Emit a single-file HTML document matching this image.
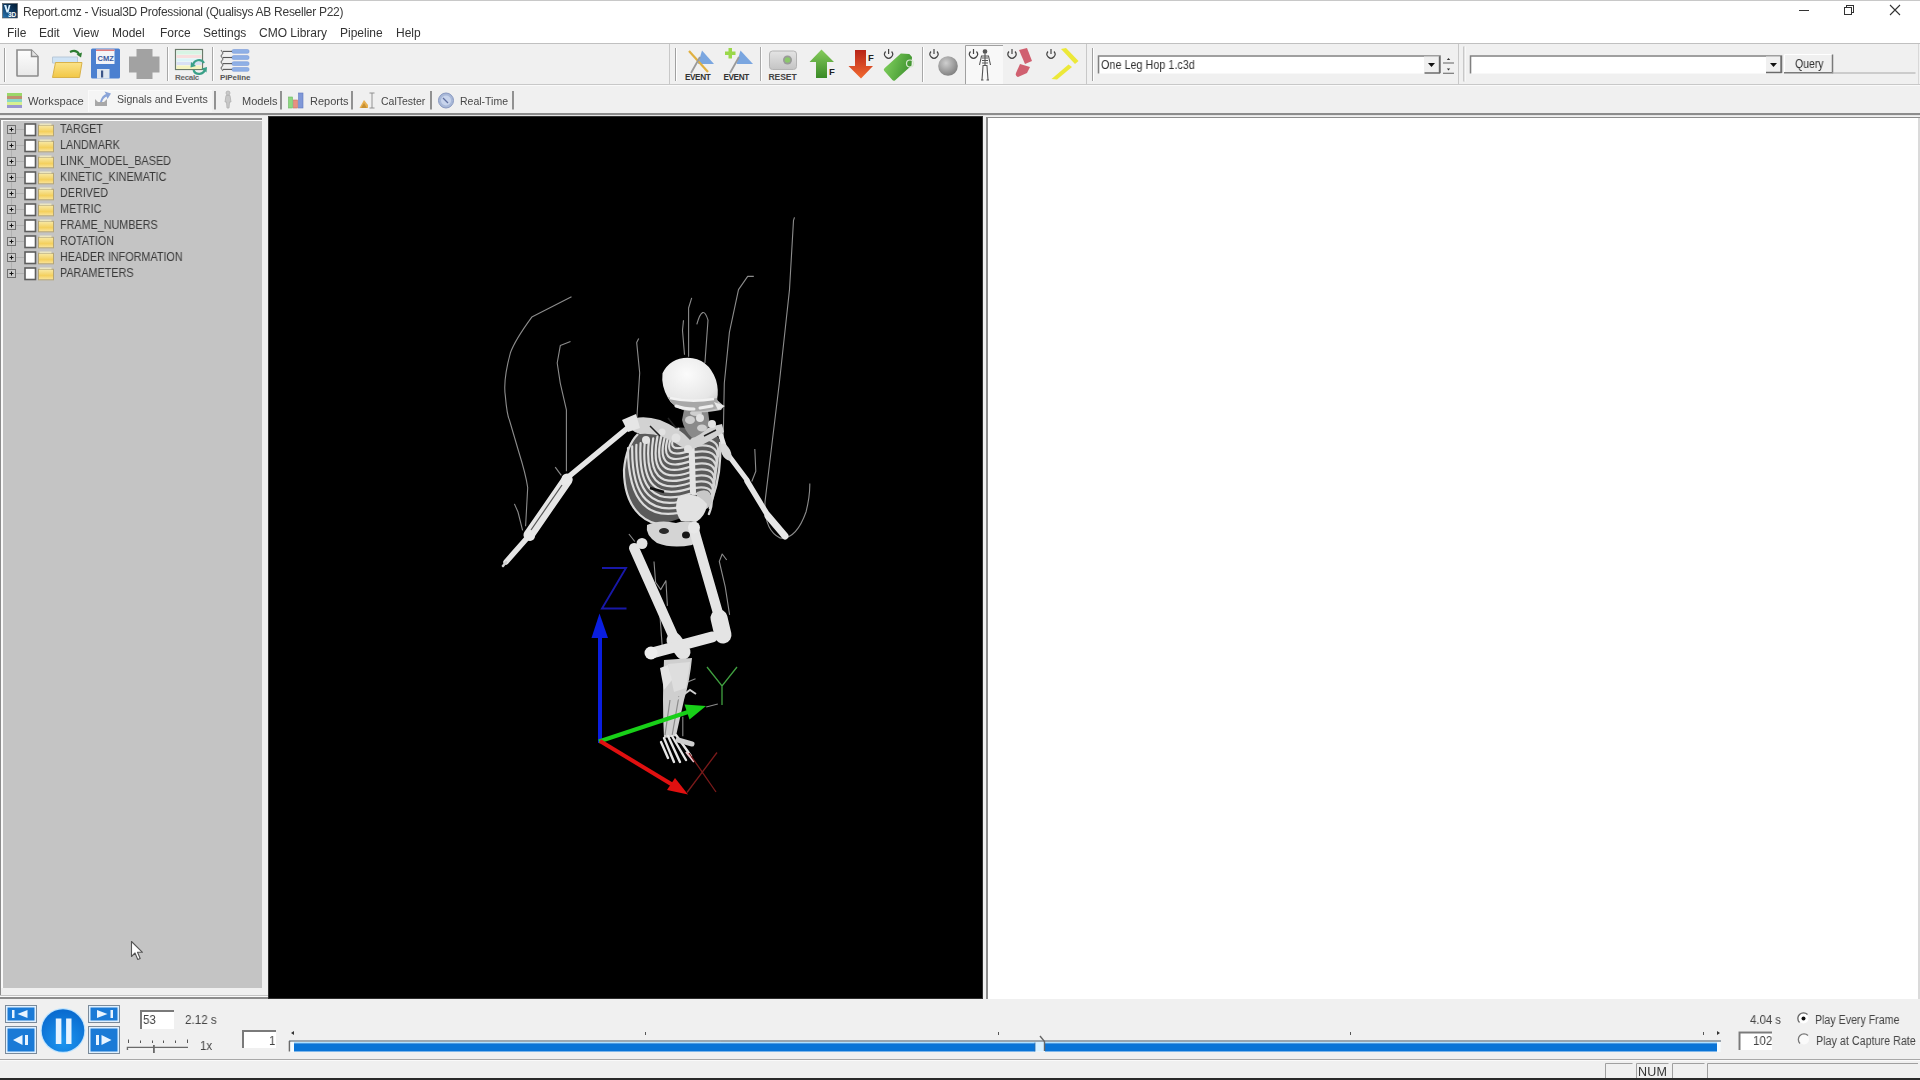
<!DOCTYPE html>
<html><head><meta charset="utf-8">
<style>
*{box-sizing:border-box;margin:0;padding:0}
html,body{width:1920px;height:1080px;overflow:hidden;background:#f0f0f0;font-family:"Liberation Sans",sans-serif;color:#000;position:relative}
.a{position:absolute}
.t{position:absolute;white-space:nowrap;line-height:1;will-change:transform}
.hl{position:absolute;height:1px}
.vl{position:absolute;width:1px}
</style></head><body>
<!-- title bar -->
<div class="a" style="left:0;top:0;width:1920px;height:43px;background:#fff"></div>
<div class="hl" style="left:0;top:0;width:1920px;background:#c8c8c8"></div>
<svg class="a" style="left:2px;top:3px" width="17" height="16" viewBox="2 3 17 16">
<defs><linearGradient id="gIco" x1="0" y1="1" x2="1" y2="0"><stop offset="0" stop-color="#2a7ab8"/><stop offset="0.5" stop-color="#0e3a64"/><stop offset="1" stop-color="#031a30"/></linearGradient></defs>
<rect x="2.5" y="3.5" width="15" height="14.5" fill="url(#gIco)" stroke="#555" stroke-width="0.6"/>
<path d="M4 5 H6.3 L7.5 10 L8.7 5 H10.5 L8.5 12.5 H6.5 Z" fill="#d8f0ff"/>
<text x="8" y="17" font-family="Liberation Sans" font-weight="bold" font-size="6.5" fill="#fff">3D</text>
</svg>
<div class="t" style="left:23px;top:6px;font-size:12px;letter-spacing:-0.28px;color:#3a3a3a">Report.cmz - Visual3D Professional (Qualisys AB Reseller P22)</div>
<div class="a" style="left:1799px;top:10px;width:10px;height:1px;background:#333"></div>
<div class="a" style="left:1846px;top:5px;width:8px;height:8px;border:1px solid #333"></div>
<div class="a" style="left:1844px;top:7px;width:8px;height:8px;border:1px solid #333;background:#fff"></div>
<svg class="a" style="left:1889px;top:4px" width="12" height="12"><path d="M1 1L11 11M11 1L1 11" stroke="#333" stroke-width="1.1"/></svg>
<!-- menu -->
<div class="t" style="left:7px;top:27px;font-size:12px;color:#333;word-spacing:0">File</div>
<div class="t" style="left:39px;top:27px;font-size:12px;color:#333">Edit</div>
<div class="t" style="left:73px;top:27px;font-size:12px;color:#333">View</div>
<div class="t" style="left:112px;top:27px;font-size:12px;color:#333">Model</div>
<div class="t" style="left:160px;top:27px;font-size:12px;color:#333">Force</div>
<div class="t" style="left:203px;top:27px;font-size:12px;color:#333">Settings</div>
<div class="t" style="left:259px;top:27px;font-size:12px;color:#333">CMO Library</div>
<div class="t" style="left:340px;top:27px;font-size:12px;color:#333">Pipeline</div>
<div class="t" style="left:396px;top:27px;font-size:12px;color:#333">Help</div>
<div class="hl" style="left:0;top:43px;width:1920px;background:#c0c0c0"></div>
<div class="hl" style="left:0;top:84px;width:1920px;background:#c8c8c8"></div>
<div class="hl" style="left:0;top:85px;width:1920px;background:#fafafa"></div>
<div class="hl" style="left:0;top:113px;width:1920px;height:2px;background:#8c8c8c"></div>
<div class="hl" style="left:0;top:115px;width:1920px;height:1px;background:#e4e4e4"></div>


<!-- toolbar svg -->
<svg class="a" style="left:0;top:44px" width="1920" height="40" viewBox="0 44 1920 40">
<defs>
<linearGradient id="gPage" x1="0" y1="0" x2="0" y2="1"><stop offset="0" stop-color="#fdfdfd"/><stop offset="1" stop-color="#e8e8e8"/></linearGradient>
<linearGradient id="gFold" x1="0" y1="0" x2="0" y2="1"><stop offset="0" stop-color="#fbe38a"/><stop offset="1" stop-color="#f2c745"/></linearGradient>
<linearGradient id="gUp" x1="0" y1="0" x2="0" y2="1"><stop offset="0" stop-color="#7fc85a"/><stop offset="1" stop-color="#3e8e2a"/></linearGradient>
<linearGradient id="gDn" x1="0" y1="0" x2="0" y2="1"><stop offset="0" stop-color="#c0281a"/><stop offset="1" stop-color="#f05a28"/></linearGradient>
<radialGradient id="gSph" cx="0.4" cy="0.35" r="0.7"><stop offset="0" stop-color="#c8c8c8"/><stop offset="1" stop-color="#7a7a7a"/></radialGradient>
</defs>
<!-- grip -->
<line x1="4.5" y1="48" x2="4.5" y2="82" stroke="#a0a0a0"/><line x1="5.5" y1="48" x2="5.5" y2="82" stroke="#fff"/>
<!-- new doc -->
<path d="M17 50 H31.5 L38 56.5 V75.5 Q38 76 37.5 76 H17.5 Q17 76 17 75.5 Z" fill="url(#gPage)" stroke="#8c8c8c" stroke-width="1.6"/>
<path d="M31.5 50 V56.5 H38" fill="#e4e4e4" stroke="#8c8c8c" stroke-width="1.4"/>
<!-- open folder -->
<path d="M52.5 57 H77.5 V63 H52.5 Z" fill="#cfe3f5" stroke="#b8c8d8" stroke-width="1"/>
<path d="M55.5 62.5 H82 L79.5 77.5 H52.5 Z" fill="url(#gFold)" stroke="#d9b24a" stroke-width="1"/>
<path d="M70 52 Q76 49 79 54" fill="none" stroke="#2e7d32" stroke-width="2.2"/>
<path d="M76.5 54.5 L82 52.5 L81 57.5 Z" fill="#2e7d32"/>
<!-- save -->
<rect x="91" y="48.5" width="29" height="30" rx="1.5" fill="#4b80d0"/>
<rect x="96" y="49.5" width="18.5" height="14.5" fill="#f2f4f8"/>
<rect x="96" y="49.5" width="18.5" height="1.5" fill="#e07a7a"/>
<text x="97.5" y="61" font-family="Liberation Sans" font-weight="bold" font-size="7.5" fill="#3a5aa0">CMZ</text>
<rect x="97" y="69" width="12.5" height="9.5" fill="#dfe6ee"/>
<rect x="101" y="70.5" width="2.2" height="7" fill="#3d5688"/>
<!-- gray plus -->
<path d="M136.5 49 H152.5 V56.5 H159.5 V72.5 H152.5 V79 H136.5 V72.5 H129 V56.5 H136.5 Z" fill="#a2a2a2"/>
<!-- sep -->
<line x1="167.5" y1="47" x2="167.5" y2="81" stroke="#a8a8a8"/><line x1="168.5" y1="47" x2="168.5" y2="81" stroke="#fff"/>
<!-- recalc -->
<rect x="175.5" y="49.5" width="27" height="20" fill="#f4f8f4" stroke="#6a7a6a" stroke-width="1.2"/>
<rect x="176.5" y="51" width="25" height="3.5" fill="#d8f4e4"/>
<rect x="176.5" y="55" width="25" height="3" fill="#f8dede"/>
<rect x="176.5" y="58.5" width="25" height="3" fill="#dcf4f8"/>
<rect x="176.5" y="62" width="25" height="3" fill="#d8e0f4"/>
<rect x="176.5" y="65.5" width="25" height="3.5" fill="#f4f4c0"/>
<path d="M193 65 A6 6 0 0 1 204 63" fill="none" stroke="#3aa088" stroke-width="2.2"/>
<path d="M205 69 A6 6 0 0 1 193.5 70" fill="none" stroke="#3aa088" stroke-width="2.2"/>
<path d="M191 62 L196 66 L190.5 67.5 Z" fill="#3aa088"/><path d="M206.5 72.5 L201.5 68.5 L207 67 Z" fill="#3aa088"/>
<text x="175" y="80" font-family="Liberation Sans" font-weight="bold" font-size="8" fill="#666" letter-spacing="-0.3">Recalc</text>
<line x1="212.5" y1="47" x2="212.5" y2="81" stroke="#a8a8a8"/><line x1="213.5" y1="47" x2="213.5" y2="81" stroke="#fff"/>
<!-- pipeline -->
<g fill="#8fb0e6" stroke="#7a9ad8" stroke-width="0.6">
<rect x="232" y="49.5" width="17" height="3.8" rx="1.5"/><rect x="232" y="55.6" width="17" height="3.8" rx="1.5"/><rect x="232" y="61.7" width="17" height="3.8" rx="1.5"/><rect x="232" y="67.5" width="17" height="3.8" rx="1.5"/></g>
<g stroke="#555" stroke-width="1.1"><line x1="223" y1="51.4" x2="232" y2="51.4"/><line x1="223" y1="57.5" x2="232" y2="57.5"/><line x1="223" y1="63.6" x2="232" y2="63.6"/><line x1="223" y1="69.4" x2="232" y2="69.4"/></g>
<path d="M221 50 L223 53 L221 56 L223 59 L221 62 L223 65 L221 68 L223 71" fill="none" stroke="#777" stroke-width="1.1"/>
<text x="220" y="80" font-family="Liberation Sans" font-weight="bold" font-size="8" fill="#555" letter-spacing="-0.1">PiPeline</text>
</svg>


<!-- toolbar right -->
<svg class="a" style="left:660px;top:44px" width="1260" height="40" viewBox="660 44 1260 40">
<defs>
<linearGradient id="gUp2" x1="0" y1="0" x2="0" y2="1"><stop offset="0" stop-color="#86cc5c"/><stop offset="1" stop-color="#3a8a26"/></linearGradient>
<linearGradient id="gDn2" x1="0" y1="0" x2="0" y2="1"><stop offset="0" stop-color="#b82418"/><stop offset="1" stop-color="#f26a30"/></linearGradient>
<linearGradient id="gTag" x1="0" y1="0" x2="1" y2="1"><stop offset="0" stop-color="#7ccc5a"/><stop offset="1" stop-color="#3a8e2c"/></linearGradient>
<radialGradient id="gSph2" cx="0.4" cy="0.35" r="0.7"><stop offset="0" stop-color="#cfcfcf"/><stop offset="1" stop-color="#7c7c7c"/></radialGradient>
<linearGradient id="gRst" x1="0" y1="0" x2="0" y2="1"><stop offset="0" stop-color="#e4e4e4"/><stop offset="1" stop-color="#c4c4c4"/></linearGradient>
</defs>
<line x1="669.5" y1="44" x2="669.5" y2="84" stroke="#c8c8c8"/>
<line x1="675.5" y1="48" x2="675.5" y2="81" stroke="#a0a0a0"/><line x1="676.5" y1="48" x2="676.5" y2="81" stroke="#fff"/>
<!-- event 1 -->
<path d="M702 50.5 L714 64 H698 Z" fill="#7aa6e0"/>
<line x1="689" y1="51" x2="708" y2="72" stroke="#e0b040" stroke-width="2.2"/>
<line x1="700" y1="57" x2="691" y2="73" stroke="#9a9a9a" stroke-width="1.8"/>
<text x="685" y="80" font-family="Liberation Sans" font-weight="bold" font-size="8.2" fill="#333" letter-spacing="-0.4">EVENT</text>
<!-- event 2 -->
<path d="M740.5 50.5 L753 64 H736.5 Z" fill="#7aa6e0"/>
<path d="M725 51.5 H728.5 V48 H732 V51.5 H735.5 V55 H732 V58.5 H728.5 V55 H725 Z" fill="#9ad84a"/>
<line x1="739" y1="57" x2="730" y2="73" stroke="#9a9a9a" stroke-width="1.8"/>
<text x="723.5" y="80" font-family="Liberation Sans" font-weight="bold" font-size="8.2" fill="#333" letter-spacing="-0.4">EVENT</text>
<line x1="760.5" y1="47" x2="760.5" y2="81" stroke="#a8a8a8"/><line x1="761.5" y1="47" x2="761.5" y2="81" stroke="#fff"/>
<!-- reset -->
<rect x="769.5" y="51" width="27" height="18.5" rx="3" fill="url(#gRst)" stroke="#b4b4b4" stroke-width="1"/>
<circle cx="787.5" cy="60" r="4.5" fill="#9a9a9a"/><circle cx="787.5" cy="60" r="2.8" fill="#8ac86a"/>
<text x="768.5" y="80" font-family="Liberation Sans" font-weight="bold" font-size="8.6" fill="#444" letter-spacing="-0.1">RESET</text>
<!-- up arrow -->
<path d="M821.5 49.5 L834 62 H827 V78 H816 V62 H809.5 Z" fill="url(#gUp2)"/>
<text x="829" y="74.5" font-family="Liberation Sans" font-weight="bold" font-size="9.5" fill="#222">F</text>
<!-- down arrow -->
<path d="M855 50 H866 V66 H873 L861 78.5 L848.5 66 H855 Z" fill="url(#gDn2)"/>
<text x="868" y="61" font-family="Liberation Sans" font-weight="bold" font-size="9.5" fill="#222">F</text>
<!-- power + tag -->
<g fill="none" stroke="#444" stroke-width="1.2"><path d="M885.6 51.5 A4 4 0 1 0 891.6 51.5"/><line x1="888.6" y1="49" x2="888.6" y2="54"/></g>
<g transform="translate(899.5 65.5) rotate(-42)"><path d="M-15 -6 Q-15 -8 -13 -8 H9 L15 -2 V2 L9 8 H-13 Q-15 8 -15 6 Z" fill="url(#gTag)"/></g>
<circle cx="910" cy="63.5" r="3.5" fill="none" stroke="#d8e8d0" stroke-width="1.2"/>
<line x1="922.5" y1="47" x2="922.5" y2="82" stroke="#a8a8a8"/><line x1="923.5" y1="47" x2="923.5" y2="82" stroke="#fff"/>
<!-- power + sphere -->
<g fill="none" stroke="#444" stroke-width="1.2"><path d="M931 51.5 A4 4 0 1 0 937 51.5"/><line x1="934" y1="49" x2="934" y2="54"/></g>
<circle cx="948" cy="66" r="9.8" fill="url(#gSph2)"/>
<!-- pressed skeleton -->
<rect x="965" y="45" width="38" height="39" fill="#f8f8f8"/>
<path d="M965.5 84 V45.5 H1003" fill="none" stroke="#a0a0a0" stroke-width="1"/>
<g fill="none" stroke="#444" stroke-width="1.2"><path d="M970.5 51.5 A4 4 0 1 0 976.5 51.5"/><line x1="973.5" y1="49" x2="973.5" y2="54"/></g>
<g fill="none" stroke="#555" stroke-width="1.1">
<circle cx="985" cy="51.5" r="1.8" fill="#555"/>
<path d="M985 53.5 V65 M981 56 H989 M981.5 56 L979.5 65 M988.5 56 L990.5 65 M982 58 H988 M982 60.5 H988 M982 63 H988 M982.5 65.5 H987.5 M983 66 L982 80 M987 66 L988 80 M981 80 H983.5 M986.5 80 H989"/>
</g>
<!-- power + red -->
<g fill="none" stroke="#444" stroke-width="1.2"><path d="M1009 51.5 A4 4 0 1 0 1015 51.5"/><line x1="1012" y1="49" x2="1012" y2="54"/></g>
<path d="M1019 50 L1027 48 L1032 61 L1025 64 Z" fill="#d06070"/>
<path d="M1020 64 L1030 67 L1027 73 L1018 77 Q1015 76 1016 73 Z" fill="#d06070"/>
<!-- power + yellow -->
<g fill="none" stroke="#444" stroke-width="1.2"><path d="M1048 51.5 A4 4 0 1 0 1054 51.5"/><line x1="1051" y1="49" x2="1051" y2="54"/></g>
<path d="M1061 49 L1066 48 L1078.5 61 L1075 64 Z" fill="#ece838"/>
<path d="M1068.5 64.5 L1072 67 L1057 79.5 L1051.5 79 Z" fill="#ece838"/>
<line x1="1086.5" y1="44" x2="1086.5" y2="84" stroke="#c8c8c8"/>
<line x1="1092.5" y1="48" x2="1092.5" y2="81" stroke="#a0a0a0"/><line x1="1093.5" y1="48" x2="1093.5" y2="81" stroke="#fff"/>
<!-- combo 1 -->
<rect x="1097.5" y="55" width="342.5" height="18.5" fill="#fff"/>
<path d="M1098.5 73.5 V56 H1440 V73" fill="none" stroke="#808080" stroke-width="1.6"/>
<rect x="1424" y="56.5" width="15" height="16" fill="#f0f0f0"/>
<path d="M1424.5 73 H1439.5 V56.5" fill="none" stroke="#6a6a6a" stroke-width="1.4"/>
<path d="M1428 63 H1435 L1431.5 67 Z" fill="#111"/>
<g stroke="#777" stroke-width="1.2"><line x1="1443" y1="63" x2="1454" y2="63"/><line x1="1443" y1="73.3" x2="1454" y2="73.3"/></g>
<path d="M1446.8 60 L1448.5 58 L1450.2 60 Z" fill="#333"/><path d="M1446.8 68.5 L1448.5 70.5 L1450.2 68.5 Z" fill="#333"/>
<line x1="1458.5" y1="44" x2="1458.5" y2="84" stroke="#c8c8c8"/>
<line x1="1464" y1="46.5" x2="1464" y2="81.5" stroke="#a0a0a0"/><line x1="1465" y1="46.5" x2="1465" y2="81.5" stroke="#fff"/>
<!-- combo 2 -->
<rect x="1469.5" y="55" width="312" height="18.5" fill="#fff"/>
<path d="M1470.5 73.5 V56 H1781.5 V73" fill="none" stroke="#808080" stroke-width="1.6"/>
<rect x="1766" y="56.5" width="15" height="16" fill="#f0f0f0"/>
<path d="M1766 72.5 H1781 V56" fill="none" stroke="#6a6a6a" stroke-width="1.4"/>
<path d="M1770 63 H1777 L1773.5 67 Z" fill="#111"/>
<!-- query -->
<rect x="1784" y="54.5" width="48.5" height="18.5" fill="#f0f0f0"/>
<path d="M1784.5 73 V54.5 H1832" fill="none" stroke="#fff" stroke-width="1"/>
<path d="M1784 72.8 H1832.5 V54.5" fill="none" stroke="#7a7a7a" stroke-width="1.5"/>
<line x1="1832" y1="73" x2="1915.5" y2="73" stroke="#a8a8a8" stroke-width="1"/>
<line x1="1918.5" y1="44" x2="1918.5" y2="84" stroke="#d8d8d8"/>
</svg>
<div class="t" style="left:1101px;top:58.5px;font-size:12.3px;color:#333;transform:scaleX(0.88);transform-origin:0 0">One Leg Hop 1.c3d</div>
<div class="t" style="left:1794.5px;top:58px;font-size:12.2px;color:#333;transform:scaleX(0.86);transform-origin:0 0">Query</div>

<!-- tab row -->
<div class="a" style="left:88px;top:90px;width:124px;height:22px;background:#f5f5f5;border-left:1px solid #fafafa;border-top:1px solid #fafafa"></div>
<svg class="a" style="left:0;top:86px" width="520" height="28" viewBox="0 86 520 28">
<rect x="7" y="93" width="15" height="3" fill="#9ad86a"/><rect x="7" y="96" width="15" height="3" fill="#c09070"/><rect x="7" y="99" width="15" height="3" fill="#8ad8c8"/><rect x="7" y="102" width="15" height="3" fill="#d8f090"/><rect x="7" y="105" width="15" height="3" fill="#9a98d0"/>
<path d="M95 99 V106 H107 V99 L104 102 H98 Z" fill="#a8a8a8"/>
<path d="M100 102 Q102 95 106 94 L104.5 91.5 L111 93.5 L107.5 99 L106.5 96.5 Q103 98 102 102 Z" fill="#8aa4d8"/>
<line x1="215" y1="91" x2="215" y2="109.5" stroke="#7a7a7a" stroke-width="1.6"/>
<g fill="#c8c8c8" stroke="#b0b0b0" stroke-width="0.8"><circle cx="228" cy="93" r="2"/><path d="M226 95.5 H230 L231 102 H229.5 L229 108 H227 L226.5 102 H225 Z"/></g>
<line x1="281" y1="91" x2="281" y2="109.5" stroke="#7a7a7a" stroke-width="1.6"/>
<rect x="288.5" y="97" width="4" height="11" fill="#8ed880" stroke="#6ab860" stroke-width="0.6"/><rect x="293.5" y="100" width="4" height="8" fill="#e89080" stroke="#c87060" stroke-width="0.6"/><rect x="298.5" y="93" width="4.5" height="15" fill="#8098d8" stroke="#6078c0" stroke-width="0.6"/>
<line x1="352" y1="91" x2="352" y2="109.5" stroke="#7a7a7a" stroke-width="1.6"/>
<path d="M359.5 108 L364 100 L368 105 V108 Z" fill="#e8b050"/><path d="M361 108 L364 103 L367 108 Z" fill="#c89030"/>
<g stroke="#888" stroke-width="0.9"><line x1="372" y1="93" x2="372" y2="108"/><line x1="369.5" y1="93" x2="374.5" y2="93"/><line x1="369.5" y1="108" x2="374.5" y2="108"/></g>
<line x1="431" y1="91" x2="431" y2="109.5" stroke="#7a7a7a" stroke-width="1.6"/>
<circle cx="446" cy="100.5" r="7.5" fill="#a8b8d8" stroke="#8898c0" stroke-width="1"/><circle cx="446" cy="100.5" r="5" fill="#c8d4ec"/><path d="M443 98 L448 103" stroke="#6070a0" stroke-width="1.2"/>
<line x1="513" y1="91" x2="513" y2="109.5" stroke="#7a7a7a" stroke-width="1.6"/>
</svg>
<div class="t" style="left:28px;top:96px;font-size:11.2px;color:#484848">Workspace</div>
<div class="t" style="left:117px;top:94px;font-size:10.6px;color:#484848">Signals and Events</div>
<div class="t" style="left:242px;top:96px;font-size:11px;color:#484848">Models</div>
<div class="t" style="left:310px;top:96px;font-size:11px;color:#484848">Reports</div>
<div class="t" style="left:381px;top:96px;font-size:10.5px;color:#484848">CalTester</div>
<div class="t" style="left:460px;top:96px;font-size:10.5px;color:#484848">Real-Time</div>

<!-- left panel -->
<div class="a" style="left:0;top:116px;width:268px;height:883px;background:#f0f0f0"></div>
<div class="a" style="left:0;top:118px;width:262px;height:2px;background:#8c8c8c"></div>
<div class="a" style="left:0;top:118px;width:1px;height:880px;background:#8c8c8c"></div>
<div class="a" style="left:1px;top:120px;width:2px;height:868px;background:#fafafa"></div>
<div class="a" style="left:1px;top:120px;width:261px;height:1px;background:#fafafa"></div>
<div class="a" style="left:3px;top:121px;width:259px;height:867px;background:#c4c4c4"></div>
<div class="a" style="left:0;top:995px;width:268px;height:1px;background:#c4c4c4"></div>
<div class="a" style="left:0;top:996px;width:268px;height:1px;background:#fafafa"></div>
<div class="a" style="left:0;top:997px;width:268px;height:2px;background:#8c8c8c"></div>

<!-- tree -->
<svg class="a" style="left:0;top:118px" width="262" height="170" viewBox="0 118 262 170">
<defs><linearGradient id="gFd" x1="0" y1="0" x2="0" y2="1"><stop offset="0" stop-color="#f8eaa8"/><stop offset="0.6" stop-color="#f4d05e"/><stop offset="1" stop-color="#fae6a0"/></linearGradient></defs>
<line x1="11.5" y1="134" x2="11.5" y2="270" stroke="#b0b0b0"/>
<rect x="7.5" y="125.5" width="8" height="8" fill="#cacaca" stroke="#707070" stroke-width="1"/>
<path d="M9.5 129.5 H13.5 M11.5 127.5 V131.5" stroke="#111" stroke-width="1"/>
<line x1="16" y1="129.5" x2="24" y2="129.5" stroke="#b0b0b0"/>
<rect x="25" y="124" width="10.5" height="11.5" fill="#fff" stroke="#5e5e5e" stroke-width="1.6"/>
<rect x="38.5" y="125.3" width="15" height="10.5" fill="url(#gFd)" stroke="#b4a474" stroke-width="1"/><rect x="39.5" y="123.5" width="12" height="1.8" fill="#ece6c0"/>

<rect x="7.5" y="141.5" width="8" height="8" fill="#cacaca" stroke="#707070" stroke-width="1"/>
<path d="M9.5 145.5 H13.5 M11.5 143.5 V147.5" stroke="#111" stroke-width="1"/>
<line x1="16" y1="145.5" x2="24" y2="145.5" stroke="#b0b0b0"/>
<rect x="25" y="140" width="10.5" height="11.5" fill="#fff" stroke="#5e5e5e" stroke-width="1.6"/>
<rect x="38.5" y="141.3" width="15" height="10.5" fill="url(#gFd)" stroke="#b4a474" stroke-width="1"/><rect x="39.5" y="139.5" width="12" height="1.8" fill="#ece6c0"/>

<rect x="7.5" y="157.5" width="8" height="8" fill="#cacaca" stroke="#707070" stroke-width="1"/>
<path d="M9.5 161.5 H13.5 M11.5 159.5 V163.5" stroke="#111" stroke-width="1"/>
<line x1="16" y1="161.5" x2="24" y2="161.5" stroke="#b0b0b0"/>
<rect x="25" y="156" width="10.5" height="11.5" fill="#fff" stroke="#5e5e5e" stroke-width="1.6"/>
<rect x="38.5" y="157.3" width="15" height="10.5" fill="url(#gFd)" stroke="#b4a474" stroke-width="1"/><rect x="39.5" y="155.5" width="12" height="1.8" fill="#ece6c0"/>

<rect x="7.5" y="173.5" width="8" height="8" fill="#cacaca" stroke="#707070" stroke-width="1"/>
<path d="M9.5 177.5 H13.5 M11.5 175.5 V179.5" stroke="#111" stroke-width="1"/>
<line x1="16" y1="177.5" x2="24" y2="177.5" stroke="#b0b0b0"/>
<rect x="25" y="172" width="10.5" height="11.5" fill="#fff" stroke="#5e5e5e" stroke-width="1.6"/>
<rect x="38.5" y="173.3" width="15" height="10.5" fill="url(#gFd)" stroke="#b4a474" stroke-width="1"/><rect x="39.5" y="171.5" width="12" height="1.8" fill="#ece6c0"/>

<rect x="7.5" y="189.5" width="8" height="8" fill="#cacaca" stroke="#707070" stroke-width="1"/>
<path d="M9.5 193.5 H13.5 M11.5 191.5 V195.5" stroke="#111" stroke-width="1"/>
<line x1="16" y1="193.5" x2="24" y2="193.5" stroke="#b0b0b0"/>
<rect x="25" y="188" width="10.5" height="11.5" fill="#fff" stroke="#5e5e5e" stroke-width="1.6"/>
<rect x="38.5" y="189.3" width="15" height="10.5" fill="url(#gFd)" stroke="#b4a474" stroke-width="1"/><rect x="39.5" y="187.5" width="12" height="1.8" fill="#ece6c0"/>

<rect x="7.5" y="205.5" width="8" height="8" fill="#cacaca" stroke="#707070" stroke-width="1"/>
<path d="M9.5 209.5 H13.5 M11.5 207.5 V211.5" stroke="#111" stroke-width="1"/>
<line x1="16" y1="209.5" x2="24" y2="209.5" stroke="#b0b0b0"/>
<rect x="25" y="204" width="10.5" height="11.5" fill="#fff" stroke="#5e5e5e" stroke-width="1.6"/>
<rect x="38.5" y="205.3" width="15" height="10.5" fill="url(#gFd)" stroke="#b4a474" stroke-width="1"/><rect x="39.5" y="203.5" width="12" height="1.8" fill="#ece6c0"/>

<rect x="7.5" y="221.5" width="8" height="8" fill="#cacaca" stroke="#707070" stroke-width="1"/>
<path d="M9.5 225.5 H13.5 M11.5 223.5 V227.5" stroke="#111" stroke-width="1"/>
<line x1="16" y1="225.5" x2="24" y2="225.5" stroke="#b0b0b0"/>
<rect x="25" y="220" width="10.5" height="11.5" fill="#fff" stroke="#5e5e5e" stroke-width="1.6"/>
<rect x="38.5" y="221.3" width="15" height="10.5" fill="url(#gFd)" stroke="#b4a474" stroke-width="1"/><rect x="39.5" y="219.5" width="12" height="1.8" fill="#ece6c0"/>

<rect x="7.5" y="237.5" width="8" height="8" fill="#cacaca" stroke="#707070" stroke-width="1"/>
<path d="M9.5 241.5 H13.5 M11.5 239.5 V243.5" stroke="#111" stroke-width="1"/>
<line x1="16" y1="241.5" x2="24" y2="241.5" stroke="#b0b0b0"/>
<rect x="25" y="236" width="10.5" height="11.5" fill="#fff" stroke="#5e5e5e" stroke-width="1.6"/>
<rect x="38.5" y="237.3" width="15" height="10.5" fill="url(#gFd)" stroke="#b4a474" stroke-width="1"/><rect x="39.5" y="235.5" width="12" height="1.8" fill="#ece6c0"/>

<rect x="7.5" y="253.5" width="8" height="8" fill="#cacaca" stroke="#707070" stroke-width="1"/>
<path d="M9.5 257.5 H13.5 M11.5 255.5 V259.5" stroke="#111" stroke-width="1"/>
<line x1="16" y1="257.5" x2="24" y2="257.5" stroke="#b0b0b0"/>
<rect x="25" y="252" width="10.5" height="11.5" fill="#fff" stroke="#5e5e5e" stroke-width="1.6"/>
<rect x="38.5" y="253.3" width="15" height="10.5" fill="url(#gFd)" stroke="#b4a474" stroke-width="1"/><rect x="39.5" y="251.5" width="12" height="1.8" fill="#ece6c0"/>

<rect x="7.5" y="269.5" width="8" height="8" fill="#cacaca" stroke="#707070" stroke-width="1"/>
<path d="M9.5 273.5 H13.5 M11.5 271.5 V275.5" stroke="#111" stroke-width="1"/>
<line x1="16" y1="273.5" x2="24" y2="273.5" stroke="#b0b0b0"/>
<rect x="25" y="268" width="10.5" height="11.5" fill="#fff" stroke="#5e5e5e" stroke-width="1.6"/>
<rect x="38.5" y="269.3" width="15" height="10.5" fill="url(#gFd)" stroke="#b4a474" stroke-width="1"/><rect x="39.5" y="267.5" width="12" height="1.8" fill="#ece6c0"/>

</svg>
<div class="t" style="left:59.5px;top:123px;font-size:12.2px;color:#3a3a3a;transform:scaleX(0.885);transform-origin:0 0">TARGET</div>
<div class="t" style="left:59.5px;top:139px;font-size:12.2px;color:#3a3a3a;transform:scaleX(0.885);transform-origin:0 0">LANDMARK</div>
<div class="t" style="left:59.5px;top:155px;font-size:12.2px;color:#3a3a3a;transform:scaleX(0.885);transform-origin:0 0">LINK_MODEL_BASED</div>
<div class="t" style="left:59.5px;top:171px;font-size:12.2px;color:#3a3a3a;transform:scaleX(0.885);transform-origin:0 0">KINETIC_KINEMATIC</div>
<div class="t" style="left:59.5px;top:187px;font-size:12.2px;color:#3a3a3a;transform:scaleX(0.885);transform-origin:0 0">DERIVED</div>
<div class="t" style="left:59.5px;top:203px;font-size:12.2px;color:#3a3a3a;transform:scaleX(0.885);transform-origin:0 0">METRIC</div>
<div class="t" style="left:59.5px;top:219px;font-size:12.2px;color:#3a3a3a;transform:scaleX(0.885);transform-origin:0 0">FRAME_NUMBERS</div>
<div class="t" style="left:59.5px;top:235px;font-size:12.2px;color:#3a3a3a;transform:scaleX(0.885);transform-origin:0 0">ROTATION</div>
<div class="t" style="left:59.5px;top:251px;font-size:12.2px;color:#3a3a3a;transform:scaleX(0.885);transform-origin:0 0">HEADER INFORMATION</div>
<div class="t" style="left:59.5px;top:267px;font-size:12.2px;color:#3a3a3a;transform:scaleX(0.885);transform-origin:0 0">PARAMETERS</div>

<!-- cursor -->
<svg class="a" style="left:130px;top:940px" width="16" height="22" viewBox="0 0 16 22">
<path d="M1.5 1.5 V16.5 L5 13 L7.8 19.5 L10.2 18.5 L7.5 12.3 H12.5 Z" fill="#fff" stroke="#555" stroke-width="1.1" stroke-linejoin="round"/>
</svg>

<!-- viewport -->
<div class="a" style="left:268px;top:116px;width:715px;height:883px;background:#000;border:1px solid #2e2e2e"></div>

<!-- skeleton view -->
<svg class="a" style="left:268px;top:116px;filter:blur(0.45px)" width="715" height="883" viewBox="268 116 715 883">
<defs>
<radialGradient id="gSk" cx="0.4" cy="0.3" r="0.75"><stop offset="0" stop-color="#fbfbfb"/><stop offset="0.7" stop-color="#e6e6e6"/><stop offset="1" stop-color="#c4c4c4"/></radialGradient>
</defs>
<g fill="none" stroke="#8c8c8c" stroke-width="1.1" stroke-linejoin="round">
<path d="M571.5 296.8 L531.8 317.1 Q515 340 510.4 352.8 Q503 380 505.3 395.6 Q507 415 509.4 420 L518.5 451 Q526 475 527.7 487.6 L525.6 526.3"/>
<path d="M514.4 503.9 L518 512 L522.6 530.4"/>
<path d="M570.5 341.6 L560.3 345.6 L557.2 363 L560.3 383.3 L566.4 409.8 L566.4 471.3"/>
<path d="M555.2 467.2 L561.3 475.4"/>
<path d="M638.7 338.5 L636.7 342.6 L639.7 373 L636.7 420.4"/>
<path d="M683.5 320.2 L682.5 330.4 L684.5 354.8"/>
<path d="M691.7 297.8 L688.6 308 L688.6 356.8"/>
<path d="M696.8 324.3 Q702.9 303 708 320.2 L704.9 363"/>
<path d="M753.8 276.4 L747.7 276.4 L738.5 289.6 L729.4 332.4 L724.3 383.3 L723.2 440.7"/>
<path d="M794.5 217.3 L793.5 220.4 L789.5 289.6 L779.3 383.3 L771.1 451 L765 501.9 Q764 530 780 538 Q796 540 806 512 Q810 496 809.8 483.5"/>
<path d="M754.8 448.9 L755.8 471.3 L751.8 481.5"/>
<path d="M628.9 534 L634.8 541.5"/>
<path d="M654 561.5 L655.6 582.2 L660.7 589.6 L665.9 580.7 L667.4 605.9"/>
<path d="M660 616.3 L662.2 645.9"/>
<path d="M726.7 560 L722.2 554 L719.3 561.5 L725.2 586.7 L729.6 614.8"/>
<path d="M682.8 716.7 L682.8 736.2"/>
<path d="M685.7 682.7 L695.5 678.8"/>
<path d="M706.2 707 L717.8 704"/>
</g>
<!-- arms -->
<g stroke="#e6e6e6" stroke-linecap="round" fill="none">
<path d="M630 426 L567 478" stroke-width="5.5"/>
<path d="M567 480 L529 535" stroke-width="11"/>
<path d="M528 537 L506 562" stroke-width="5.5"/>
<path d="M719 430 L726 452 L747 480" stroke-width="5"/>
<path d="M747 481 L767 514" stroke-width="5.5"/>
<path d="M768 516 L785 536" stroke-width="7"/>
</g>
<path d="M562 485 L531 530" stroke="#555" stroke-width="1.2"/>
<circle cx="567" cy="479" r="5.5" fill="#e8e8e8"/>
<ellipse cx="726" cy="452" rx="4.5" ry="9" transform="rotate(-25 726 452)" fill="#d8d8d8"/>
<circle cx="530" cy="536" r="5" fill="#e8e8e8"/>
<path d="M506 562 L503 566" stroke="#d0d0d0" stroke-width="2.5" stroke-linecap="round"/>
<!-- ribcage base -->
<path d="M640 432 Q626 444 624 470 Q624 500 640 515 Q650 524 662 524 Q700 514 714 498 Q722 470 720 440 Q712 428 695 428 Q660 426 640 432 Z" fill="#5a5a5a"/>
<path d="M628.0 448.0 Q628.0 530.0 690.0 510.0 M632.2 446.4 Q630.8 523.8 690.0 504.6 M636.4 444.8 Q633.6 517.6 690.0 499.2 M640.6 443.2 Q636.4 511.4 690.0 493.8 M644.8 441.6 Q639.2 505.2 690.0 488.4 M649.0 440.0 Q642.0 499.0 690.0 483.0 M653.2 438.4 Q644.8 492.8 690.0 477.6 M657.4 436.8 Q647.6 486.6 690.0 472.2 M661.6 435.2 Q650.4 480.4 690.0 466.8 M665.8 433.6 Q653.2 474.2 690.0 461.4 M670.0 432.0 Q656.0 468.0 690.0 456.0 M674.2 430.4 Q658.8 461.8 690.0 450.6 M678.4 428.8 Q661.6 455.6 690.0 445.2" fill="none" stroke="#dcdcdc" stroke-width="2.2" stroke-linecap="round"/>
<path d="M695 440.0 Q724.0 436.0 717.0 460.0 M695 446.0 Q723.4 442.0 716.1 466.0 M695 452.0 Q722.8 448.0 715.2 472.0 M695 458.0 Q722.2 454.0 714.3 478.0 M695 464.0 Q721.6 460.0 713.4 484.0 M695 470.0 Q721.0 466.0 712.5 490.0 M695 476.0 Q720.4 472.0 711.6 496.0 M695 482.0 Q719.8 478.0 710.7 502.0 M695 488.0 Q719.2 484.0 709.8 508.0 M695 494.0 Q718.6 490.0 708.9 514.0" fill="none" stroke="#d6d6d6" stroke-width="2.3" stroke-linecap="round"/>
<path d="M638 434 Q626 446 624 470 Q624 500 640 515 Q650 524 662 524" fill="none" stroke="#d8d8d8" stroke-width="2.2"/>
<path d="M720 442 Q722 472 712 500" fill="none" stroke="#d4d4d4" stroke-width="2.2"/>
<path d="M691.5 444 L693 492" stroke="#e4e4e4" stroke-width="6" stroke-linecap="round"/>
<!-- shoulder girdle / neck -->
<path d="M628 421 Q640 414 660 420 Q680 428 690 440 Q700 428 722 424 L724 432 Q712 440 700 446 Q690 452 680 446 Q660 432 640 434 Q630 432 628 421 Z" fill="#d2d2d2"/>
<path d="M684 410 Q696 414 708 411 L710 426 Q700 436 692 438 Q684 430 682 420 Z" fill="#8a8a8a"/><g fill="#cfcfcf"><ellipse cx="690" cy="420" rx="5" ry="4"/><ellipse cx="702" cy="428" rx="5" ry="3.5"/><ellipse cx="696" cy="413" rx="6" ry="3"/></g>
<g fill="#e2e2e2"><circle cx="676" cy="438" r="4.5"/><circle cx="688" cy="449" r="4"/><circle cx="712" cy="424" r="4"/><circle cx="662" cy="432" r="3.5"/><circle cx="646" cy="440" r="4"/><circle cx="700" cy="418" r="4"/></g>
<path d="M650 426 L660 436 M668 418 L676 428 M704 436 L716 430" stroke="#222" stroke-width="1.5"/>
<path d="M622 420 L636 414 L640 428 L628 432 Z" fill="#e6e6e6"/>
<path d="M697 492 Q712 486 712 502 Q706 514 697 508 Z" fill="#c8c8c8"/>
<path d="M650 488 L664 492" stroke="#111" stroke-width="2.5"/>
<!-- neck / jaw -->
<!-- skull -->
<path d="M687.8 357.8 Q708 358 716 380 Q719 390 717 400 L724 406 L721 410 Q700 414 688 411 Q672 407 668 398 Q661 386 662.5 373.3 Q670 358 687.8 357.8 Z" fill="url(#gSk)"/>
<path d="M668 397 Q690 404 717 398 L719 408 Q700 413 686 411 Q672 407 668 397 Z" fill="#a8a8a8"/>
<path d="M670 398 Q690 403 714 399" stroke="#f2f2f2" stroke-width="2.5" fill="none"/>
<path d="M676 406 Q684 409 694 409 M700 408 L712 406" stroke="#ededed" stroke-width="3" fill="none" stroke-linecap="round"/>
<path d="M714 402 L725 406 L718 410 Z" fill="#e8e8e8"/>
<!-- pelvis -->
<path d="M678 497 Q696 490 707 504 Q706 516 696 522 L681 521 Q673 510 678 497 Z" fill="#e2e2e2"/>
<path d="M647 525 Q660 519 676 523 Q690 518 699 527 Q701 540 692 545 Q672 549 657 543 Q645 535 647 525 Z" fill="#d4d4d4"/>
<ellipse cx="686" cy="535" rx="4" ry="3.5" fill="#161616"/>
<ellipse cx="664" cy="531" rx="5" ry="3" fill="#2a2a2a"/>
<!-- legs -->
<g stroke="#e4e4e4" stroke-linecap="round" fill="none">
<path d="M634 548 L675 640" stroke-width="10"/>
<path d="M674 640 L683 652" stroke-width="15"/>
<path d="M694 530 L720 620" stroke-width="10"/>
<path d="M719 618 L723 635" stroke-width="17"/>
<path d="M712 637 L652 653" stroke-width="11"/>
</g>
<circle cx="642" cy="543.5" r="5.5" fill="#e4e4e4"/>
<circle cx="694" cy="527.5" r="6" fill="#e8e8e8"/>
<circle cx="651" cy="653" r="6.5" fill="#ececec"/>
<!-- lower leg -->
<path d="M664 660 L692 658 Q690 680 684 700 L676 736 L664 738 Q662 700 664 660 Z" fill="#cfcfcf"/>
<path d="M668 664 L690 662 L686 688 L674 692 Z" fill="#dedede"/>
<path d="M670 700 L665 735 M679 696 L672 736" stroke="#8a8a8a" stroke-width="1.2"/>
<path d="M660 668 L668 665 L672 680 L664 690 Z" fill="#e4e4e4"/>
<g stroke="#e6e6e6" stroke-linecap="round" stroke-width="2.4" fill="none">
<path d="M664 738 L674 762"/><path d="M668 736 L680 762"/><path d="M672 736 L686 760"/><path d="M676 735 L691 756"/><path d="M661 742 L668 758"/>
</g>
<path d="M678 740 L692 744" stroke="#cfcfcf" stroke-width="5" stroke-linecap="round"/>
<path d="M686 752 L694 762" stroke="#f0c8d0" stroke-width="2"/>
<path d="M676 700 L690 690 L696 694" stroke="#cfcfcf" stroke-width="2" fill="none"/>
<!-- axes -->
<path d="M600 743 V636" stroke="#0a1ee0" stroke-width="4"/>
<path d="M591.5 638 L599.5 613.5 L608 638 Z" fill="#0a1ee0"/>
<path d="M602 568 H626 L602 608.5 H626.5" fill="none" stroke="#1818a8" stroke-width="1.9"/>
<path d="M599 741.5 L688 712" stroke="#18d018" stroke-width="4"/>
<path d="M689.5 719.5 L706 706 L684.5 704.5 Z" fill="#18d018"/>
<path d="M707 667 L722 686 L737 667 M722 686 V705" fill="none" stroke="#40a040" stroke-width="1.3"/>
<path d="M600 741 L672 784.5" stroke="#e01010" stroke-width="4"/>
<path d="M667 790 L688 794.5 L675 778 Z" fill="#e01010"/>
<path d="M687 792.5 L717 752.5 M689 753 L716 792" fill="none" stroke="#7a1a1a" stroke-width="1.3"/>
</svg>

<!-- right panel -->
<div class="a" style="left:983px;top:116px;width:4px;height:883px;background:#f0f0f0"></div>
<div class="a" style="left:986px;top:117px;width:2px;height:882px;background:#8c8c8c"></div>
<div class="a" style="left:986px;top:117px;width:934px;height:1px;background:#8c8c8c"></div>
<div class="a" style="left:988px;top:118px;width:930px;height:881px;background:#fff"></div>
<div class="a" style="left:1918px;top:118px;width:2px;height:881px;background:#dadada"></div>

<!-- playback bar -->
<svg class="a" style="left:0;top:999px" width="1920" height="60" viewBox="0 999 1920 60">
<defs>
<radialGradient id="gPause" cx="0.5" cy="0.75" r="0.7"><stop offset="0" stop-color="#1c96f0"/><stop offset="1" stop-color="#0a6cd0"/></radialGradient>
</defs>
<g stroke="#7a8a9a" stroke-width="1" fill="#dff0ff">
<rect x="5.5" y="1005.5" width="31" height="17"/><rect x="5.5" y="1026.5" width="31" height="27"/>
<rect x="88.5" y="1005.5" width="31" height="17"/><rect x="88.5" y="1026.5" width="31" height="27"/>
</g>
<g fill="#1a7ad6">
<rect x="7.5" y="1007.5" width="27" height="13"/><rect x="7.5" y="1028.5" width="27" height="23"/>
<rect x="90.5" y="1007.5" width="27" height="13"/><rect x="90.5" y="1028.5" width="27" height="23"/>
</g>
<g fill="#e8f4ff">
<rect x="12" y="1010" width="2.5" height="8"/><path d="M17.5 1014 L27.5 1010 V1018 Z"/>
<path d="M13 1040 L22.5 1035 V1045 Z"/><rect x="25" y="1035" width="3" height="10"/>
<rect x="110.5" y="1010" width="2.5" height="8"/><path d="M107.5 1014 L97 1010 V1018 Z"/>
<rect x="96" y="1035" width="3" height="10"/><path d="M101.5 1035 L111.5 1040 L101.5 1045 Z"/>
</g>
<circle cx="63" cy="1030.5" r="22.5" fill="#bfe4ff"/>
<circle cx="63" cy="1030.5" r="21.3" fill="url(#gPause)"/>
<rect x="55.8" y="1018.5" width="5.6" height="25.5" fill="#e6f3ff"/>
<rect x="66.1" y="1018.5" width="5.4" height="25.5" fill="#e6f3ff"/>
<!-- frame box 53 -->
<rect x="140" y="1010" width="34" height="19" fill="#fff"/>
<path d="M141 1029 V1011 H174" fill="none" stroke="#7a7a7a" stroke-width="2"/>
<!-- slider -->
<g stroke="#555" stroke-width="1"><line x1="128.5" y1="1039.5" x2="128.5" y2="1043"/><line x1="140.5" y1="1040.5" x2="140.5" y2="1043"/><line x1="152.5" y1="1040.5" x2="152.5" y2="1043"/><line x1="163.5" y1="1040.5" x2="163.5" y2="1043"/><line x1="175.5" y1="1040.5" x2="175.5" y2="1043"/><line x1="187.5" y1="1039.5" x2="187.5" y2="1043"/></g>
<path d="M127.5 1050 V1047.5 H188" fill="none" stroke="#6a6a6a" stroke-width="1.5"/>
<line x1="128" y1="1048.8" x2="188" y2="1048.8" stroke="#fff" stroke-width="1"/>
<rect x="153" y="1045" width="1.8" height="8" fill="#6a6a6a"/>
<!-- box 1 -->
<rect x="242" y="1030" width="34" height="18" fill="#fff"/>
<path d="M243 1048 V1031 H276" fill="none" stroke="#7a7a7a" stroke-width="2"/>
<!-- progress -->
<path d="M291 1033 L294 1031 V1035 Z" fill="#333"/>
<path d="M1717 1031 L1720 1033 L1717 1035 Z" fill="#333"/>
<g stroke="#444" stroke-width="0.9"><line x1="645.5" y1="1032" x2="645.5" y2="1035"/><line x1="998.5" y1="1032" x2="998.5" y2="1035"/><line x1="1350.5" y1="1032" x2="1350.5" y2="1035"/><line x1="1703.5" y1="1032" x2="1703.5" y2="1035"/></g>
<rect x="289" y="1040.5" width="432" height="11" fill="#fff"/>
<line x1="289" y1="1041" x2="1721" y2="1041" stroke="#7f8c98" stroke-width="1.5"/>
<line x1="289.5" y1="1041" x2="289.5" y2="1051.5" stroke="#6a6a6a" stroke-width="1.6"/>
<rect x="290.5" y="1042" width="1430" height="10" fill="#f4fbff"/>
<rect x="294" y="1042" width="1423" height="1.2" fill="#aee0ff"/>
<rect x="294" y="1043.3" width="741" height="8.2" fill="#0a74d6"/>
<rect x="1045" y="1043.3" width="672" height="8.2" fill="#0a74d6"/>
<rect x="1035" y="1042" width="10" height="9.5" fill="#d8f0ff"/>
<path d="M1040 1036 L1044.5 1041.5 V1051" fill="none" stroke="#666" stroke-width="1.4"/>
<line x1="1035" y1="1042.5" x2="1035" y2="1051.5" stroke="#2a6aa8" stroke-width="0.8"/>
<!-- box 102 -->
<rect x="1738.5" y="1031.5" width="33.5" height="18.5" fill="#fff"/>
<path d="M1739.5 1050 V1032.5 H1772" fill="none" stroke="#7a7a7a" stroke-width="2"/>
<!-- radios -->
<circle cx="1803.5" cy="1018.5" r="5" fill="#fff"/><path d="M1799.5 1022.5 A5 5 0 0 1 1807.5 1014.5" fill="none" stroke="#666" stroke-width="1.3"/>
<circle cx="1803.5" cy="1018.5" r="2" fill="#111"/>
<circle cx="1804" cy="1039.5" r="5" fill="#fafafa"/><path d="M1800 1043.5 A5 5 0 0 1 1808 1035.5" fill="none" stroke="#777" stroke-width="1.3"/>
</svg>
<div class="t" style="left:143px;top:1013.5px;font-size:12.5px;color:#444;transform:scaleX(0.92);transform-origin:0 0">53</div>
<div class="t" style="left:185px;top:1013.5px;font-size:12.5px;color:#444;transform:scaleX(0.93);transform-origin:0 0">2.12 s</div>
<div class="t" style="left:200px;top:1039.5px;font-size:12.5px;color:#444;transform:scaleX(0.92);transform-origin:0 0">1x</div>
<div class="t" style="left:269px;top:1034.5px;font-size:12.5px;color:#444;transform:scaleX(0.92);transform-origin:0 0">1</div>
<div class="t" style="left:1750px;top:1013.5px;font-size:12.5px;color:#444;transform:scaleX(0.91);transform-origin:0 0">4.04 s</div>
<div class="t" style="left:1753px;top:1034.5px;font-size:12.5px;color:#444;transform:scaleX(0.92);transform-origin:0 0">102</div>
<div class="t" style="left:1815px;top:1013.5px;font-size:12.5px;color:#444;transform:scaleX(0.85);transform-origin:0 0">Play Every Frame</div>
<div class="t" style="left:1816px;top:1034.8px;font-size:12.5px;color:#444;transform:scaleX(0.86);transform-origin:0 0">Play at Capture Rate</div>
<!-- status panes -->
<svg class="a" style="left:1600px;top:1060px" width="320" height="18" viewBox="1600 1060 320 18">
<path d="M1605.5 1078 V1063.5 H1632.5" fill="none" stroke="#a0a0a0" stroke-width="1"/>
<path d="M1636.5 1078 V1063.5 H1668.5" fill="none" stroke="#a0a0a0" stroke-width="1"/>
<path d="M1672.5 1078 V1063.5 H1704.5" fill="none" stroke="#a0a0a0" stroke-width="1"/>
<path d="M1707.5 1078 V1063.5 H1918" fill="none" stroke="#a0a0a0" stroke-width="1"/>
</svg>
<div class="t" style="left:1638px;top:1065.8px;font-size:12.5px;color:#333;letter-spacing:0.2px">NUM</div>

<!-- status bar -->
<div class="hl" style="left:0;top:1059px;width:1920px;background:#a8a8a8"></div>
<div class="hl" style="left:0;top:1060px;width:1920px;background:#fafafa"></div>
<div class="a" style="left:0;top:1078px;width:1920px;height:2px;background:#2a2a2a"></div>
</body></html>
